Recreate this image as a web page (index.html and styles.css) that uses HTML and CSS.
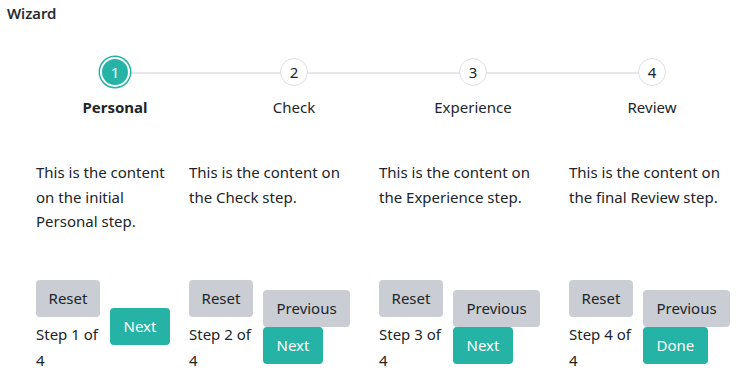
FILE: index.html
```html
<!DOCTYPE html>
<html>
<head>
<meta charset="utf-8">
<link rel="stylesheet" href="styles.css">
</head>
<body>
<div class="title">Wizard</div>
<div class="stepper">
  <div class="track"></div>
  <div class="step active"><div class="dot">1</div><div class="label">Personal</div></div>
  <div class="step"><div class="dot">2</div><div class="label">Check</div></div>
  <div class="step"><div class="dot">3</div><div class="label">Experience</div></div>
  <div class="step"><div class="dot">4</div><div class="label">Review</div></div>
</div>
<div class="panels">
  <div class="panel p1">
    <p class="text">This is the content on the initial Personal step.</p>
    <div class="footer">
      <div class="left"><button class="btn gray">Reset</button><div class="count">Step 1 of 4</div></div>
      <div class="right"><button class="btn teal">Next</button></div>
    </div>
  </div>
  <div class="panel">
    <p class="text">This is the content on the Check step.</p>
    <div class="footer">
      <div class="left"><button class="btn gray">Reset</button><div class="count">Step 2 of 4</div></div>
      <div class="right"><button class="btn gray">Previous</button><button class="btn teal">Next</button></div>
    </div>
  </div>
  <div class="panel">
    <p class="text">This is the content on the Experience step.</p>
    <div class="footer">
      <div class="left"><button class="btn gray">Reset</button><div class="count">Step 3 of 4</div></div>
      <div class="right"><button class="btn gray">Previous</button><button class="btn teal">Next</button></div>
    </div>
  </div>
  <div class="panel">
    <p class="text">This is the content on the final Review step.</p>
    <div class="footer">
      <div class="left"><button class="btn gray">Reset</button><div class="count">Step 4 of 4</div></div>
      <div class="right"><button class="btn gray">Previous</button><button class="btn teal">Done</button></div>
    </div>
  </div>
</div>
</body>
</html>
```
FILE: styles.css
```css
* { box-sizing: border-box; }
body {
  margin: 0;
  padding: 3px 7px 0 7px;
  font-family: "Noto Sans", "Open Sans", sans-serif;
  font-size: 15px;
  color: #212529;
  background: #fff;
}
.title {
  font-size: 15px;
  font-weight: 500;
  line-height: 20px;
  -webkit-text-stroke: 0.2px #212529;
}
.stepper {
  position: relative;
  display: grid;
  grid-template-columns: repeat(4, 179px);
  margin-left: 18.5px;
  margin-top: 35px;
}
.track {
  position: absolute;
  left: 89.5px;
  right: 89.5px;
  top: 14px;
  height: 2px;
  background: #e6e8eb;
}
.step {
  display: flex;
  flex-direction: column;
  align-items: center;
  position: relative;
}
.dot {
  width: 28px;
  height: 28px;
  border-radius: 50%;
  border: 1px solid #dcdfe3;
  background: #fff;
  display: flex;
  align-items: center;
  justify-content: center;
  font-size: 15px;
  line-height: 1;
}
.step.active .dot {
  width: 26px;
  height: 26px;
  margin: 1px 0;
  border: none;
  background: #25b3a5;
  color: #fff;
  box-shadow: 0 0 0 2px #fff, 0 0 0 3.5px #25b3a5;
}
.label {
  margin-top: 10px;
  line-height: 22px;
}
.step.active .label { font-weight: 700; }
.panels {
  display: grid;
  grid-template-columns: 153px 190px 190px 190px;
  margin-left: 29px;
  margin-top: 42px;
}
.panel {
  display: flex;
  flex-direction: column;
  padding-right: 12px;
}
.panel + .panel { padding-right: 24px; }
.text {
  margin: 0;
  line-height: 24.5px;
  height: 120px;
}
.footer {
  display: flex;
  align-items: center;
  gap: 10px;
}
.left {
  width: 64px;
  display: flex;
  flex-direction: column;
}
.count {
  line-height: 26px;
  padding-top: 4px;
  white-space: normal;
}
.right {
  display: flex;
  flex-direction: column;
  align-items: flex-start;
}
.btn {
  font-family: inherit;
  font-size: 15px;
  line-height: 25px;
  padding: 6px 13.5px;
  border: none;
  border-radius: 4px;
  color: #212529;
  cursor: pointer;
}
.btn.gray { background: #caced4; }
.btn.teal { background: #25b3a5; color: #fff; }
.left .btn { width: 64px; padding: 6px 0; }
```
